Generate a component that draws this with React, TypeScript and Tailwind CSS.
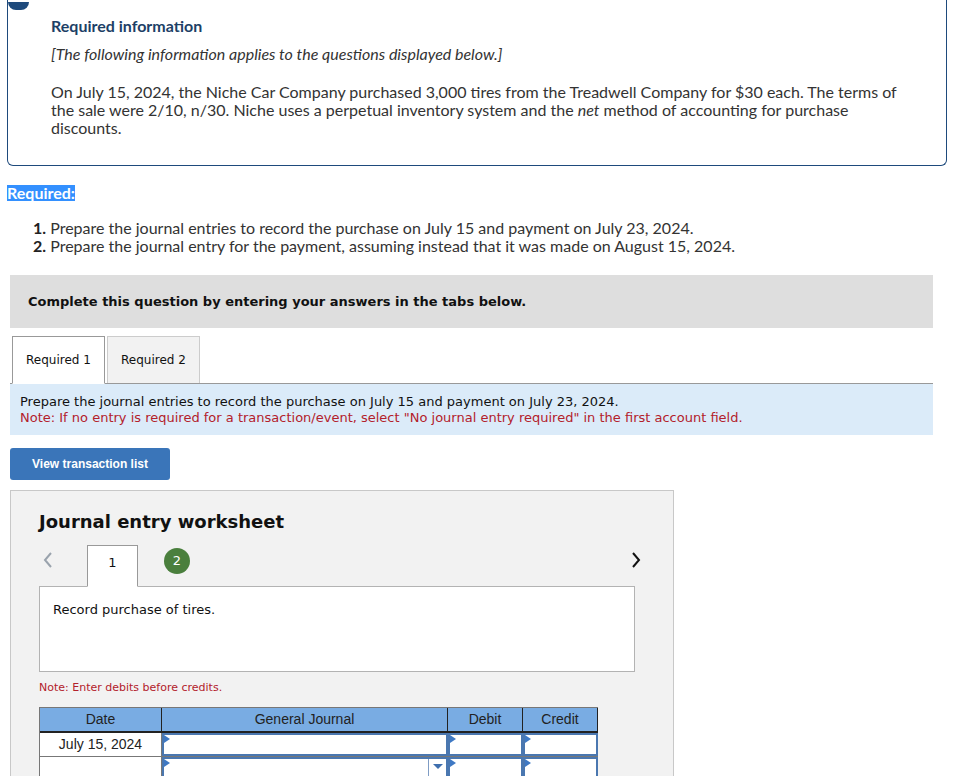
import React from 'react';

const proxima = "font-['Lato','Open_Sans',sans-serif]";
const verdana = "font-['DejaVu_Sans','Verdana',sans-serif]";
const arial = "font-['Liberation_Sans','Arial',sans-serif]";

function Marker() {
  // little blue triangle in the top-left of every input cell
  return (
    <span className="absolute left-0 top-0 w-0 h-0 border-t-[4px] border-b-[4px] border-l-[6px] border-t-transparent border-b-transparent border-l-[#3f79c4]" />
  );
}

function InputCell({ dropdown }: { dropdown?: boolean }) {
  return (
    <div className="relative h-full border-2 border-[#4a77b0] bg-white">
      <Marker />
      {dropdown && (
        <div className="absolute right-0 top-0 bottom-0 w-[18px] border-l border-[#7f9cc4] flex items-start justify-center pt-[5px]">
          <span className="w-0 h-0 border-l-[5px] border-r-[5px] border-t-[5px] border-l-transparent border-r-transparent border-t-[#3f6fae]" />
        </div>
      )}
    </div>
  );
}

export default function App() {
  return (
    <div className="w-[970px] min-h-[776px] bg-white overflow-hidden text-[#222]">
      {/* required information box */}
      <div className={`relative ml-[7px] w-[940px] border-l border-r border-b border-[#1e4a7c] rounded-b-[6px] pl-[43px] pr-[45px] pt-[17px] pb-[28px] ${proxima}`}>
        <div className="absolute left-0 top-[2px] w-[21px] h-[8px] rounded-b-full bg-[#1e4a7c]" />
        <div className="text-[16px] leading-[18px] font-bold text-[#1d3f66]">Required information</div>
        <div className="mt-[10px] text-[16px] leading-[18px] italic text-[#333]">
          [The following information applies to the questions displayed below.]
        </div>
        <p className="mt-[20px] text-[16px] leading-[18px] text-[#333]">
          On July 15, 2024, the Niche Car Company purchased 3,000 tires from the Treadwell Company for $30 each. The terms of
          the sale were 2/10, n/30. Niche uses a perpetual inventory system and the <i>net</i> method of accounting for purchase
          discounts.
        </p>
      </div>

      <div className={`mt-[15px] ml-[7px] ${proxima}`}>
        <span className="bg-[#3390ff] text-white font-bold text-[16px] leading-[16px] inline-block">Required:</span>
      </div>

      <ol className={`mt-[14px] ml-[33px] text-[16px] leading-[18px] text-[#333] ${proxima}`}>
        <li><b className="text-[#222]">1.</b> Prepare the journal entries to record the purchase on July 15 and payment on July 23, 2024.</li>
        <li><b className="text-[#222]">2.</b> Prepare the journal entry for the payment, assuming instead that it was made on August 15, 2024.</li>
      </ol>

      <div className={`mt-[20px] ml-[10px] w-[923px] h-[53px] bg-[#dedede] flex items-center pl-[18px] ${verdana}`}>
        <span className="text-[13px] font-bold text-[#111]">Complete this question by entering your answers in the tabs below.</span>
      </div>

      {/* tabs */}
      <div className={`mt-[8px] ml-[10px] w-[923px] flex items-end border-b border-[#999] h-[48px] ${verdana}`}>
        <div className="ml-[2px] w-[93px] h-[48px] -mb-px bg-white border border-[#999] border-b-white flex items-center justify-center text-[12px] text-[#111]">
          Required 1
        </div>
        <div className="ml-[2px] w-[93px] h-[47px] bg-[#f2f2f2] border border-[#ccc] border-b-0 flex items-center justify-center text-[12px] text-[#111]">
          Required 2
        </div>
      </div>

      <div className={`ml-[10px] w-[923px] h-[51px] bg-[#dbebf9] pl-[10px] pt-[10px] text-[13px] leading-[16px] ${verdana}`}>
        <div className="text-[#111]">Prepare the journal entries to record the purchase on July 15 and payment on July 23, 2024.</div>
        <div className="text-[#b3212b]">Note: If no entry is required for a transaction/event, select "No journal entry required" in the first account field.</div>
      </div>

      <button className={`mt-[13px] ml-[10px] w-[160px] h-[32px] rounded-[3px] bg-[#3a75b9] text-white text-[12px] font-bold ${arial}`}>
        View transaction list
      </button>

      {/* worksheet */}
      <div className={`mt-[10px] ml-[10px] w-[664px] h-[300px] bg-[#f2f2f2] border border-[#c8c8c8] pl-[28px] pt-[19px] ${verdana}`}>
        <div className="text-[18px] leading-[24px] font-bold text-[#111]">Journal entry worksheet</div>

        <div className="mt-[11px] flex items-end w-[596px] h-[41px] relative">
          <svg className="absolute left-[3px] top-[6px]" width="12" height="18" viewBox="0 0 12 18">
            <path d="M9 2 L3 9 L9 16" fill="none" stroke="#9aa3ad" strokeWidth="2" />
          </svg>
          <div className="ml-[48px] w-[51px] h-[42px] -mb-px bg-white border border-[#999] border-b-white flex items-start justify-center pt-[7px] text-[13px] text-[#111] relative z-10">
            1
          </div>
          <div className="ml-[26px] mb-[12px] w-[26px] h-[26px] rounded-full bg-[#4a7f3d] text-white text-[13px] flex items-center justify-center">
            2
          </div>
          <svg className="absolute left-[591px] top-[6px]" width="12" height="18" viewBox="0 0 12 18">
            <path d="M3 2 L9 9 L3 16" fill="none" stroke="#111" strokeWidth="2" />
          </svg>
        </div>

        <div className="w-[596px] h-[86px] bg-white border border-[#b3b3b3] pl-[13px] pt-[13px] text-[13px] text-[#111]">
          Record purchase of tires.
        </div>

        <div className="mt-[8px] text-[11px] text-[#b3212b]">Note: Enter debits before credits.</div>

        <div className={`mt-[10px] w-[559px] border-t border-l border-[#777] ${arial}`}>
          <div className="grid grid-cols-[122px_286px_75px_75px] h-[25px] bg-[#79ace3] border-b-2 border-[#222] text-[14px] text-[#222]">
            <div className="flex items-center justify-center border-r border-[#222]">Date</div>
            <div className="flex items-center justify-center border-r border-[#222]">General Journal</div>
            <div className="flex items-center justify-center border-r border-[#222]">Debit</div>
            <div className="flex items-center justify-center border-r border-[#222]">Credit</div>
          </div>
          <div className="grid grid-cols-[122px_286px_75px_75px] h-[24px] border-b border-[#777]">
            <div className="flex items-center justify-center bg-white text-[14px] text-[#222] border-r border-[#777]">July 15, 2024</div>
            <InputCell />
            <InputCell />
            <InputCell />
          </div>
          <div className="grid grid-cols-[122px_286px_75px_75px] h-[24px]">
            <div className="bg-white border-r border-[#777]" />
            <InputCell dropdown />
            <InputCell />
            <InputCell />
          </div>
        </div>
      </div>
    </div>
  );
}
